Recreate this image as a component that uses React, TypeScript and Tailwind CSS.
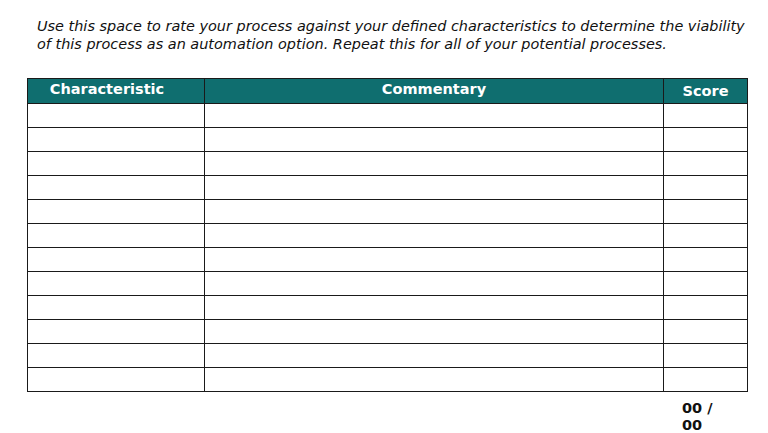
import React from "react";

export default function App() {
  const rows = Array.from({ length: 12 });
  return (
    <div
      className="w-[768px] h-[433px] bg-white text-[#111] overflow-hidden"
      style={{ fontFamily: '"DejaVu Sans", sans-serif' }}
    >
      <p className="pl-[37px] pt-[17px] text-[14.45px] leading-[18px] italic whitespace-nowrap">
        Use this space to rate your process against your defined characteristics to determine the viability
        <br />
        of this process as an automation option. Repeat this for all of your potential processes.
      </p>
      <div className="ml-[27px] mt-[25px] w-[720px]">
        <table className="w-full border-collapse table-fixed">
          <colgroup>
            <col className="w-[177px]" />
            <col className="w-[459px]" />
            <col className="w-[84px]" />
          </colgroup>
          <thead>
            <tr className="h-[24px] bg-[#0f6e6f] text-white text-[14.5px] font-bold">
              <th className="border border-[#1a1a1a] text-center align-middle pb-[2px] pr-[18px]">Characteristic</th>
              <th className="border border-[#1a1a1a] text-center align-middle pb-[2px]">Commentary</th>
              <th className="border border-[#1a1a1a] text-center align-middle pt-[2px]">Score</th>
            </tr>
          </thead>
          <tbody>
            {rows.map((_, i) => (
              <tr key={i} className="h-[24px]">
                <td className="border border-[#1a1a1a]"></td>
                <td className="border border-[#1a1a1a]"></td>
                <td className="border border-[#1a1a1a]"></td>
              </tr>
            ))}
          </tbody>
        </table>
      </div>
      <div className="ml-[682px] mt-[8px] w-[40px] text-[14.5px] leading-[17px] font-bold">00 / 00</div>
    </div>
  );
}
